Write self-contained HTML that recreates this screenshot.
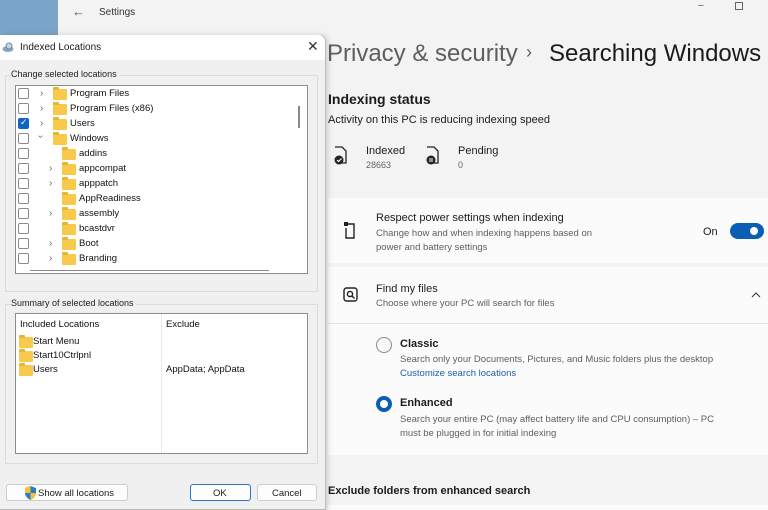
<!DOCTYPE html>
<html><head><meta charset="utf-8"><style>
*{box-sizing:border-box;margin:0;padding:0}
body{width:768px;height:510px;overflow:hidden;position:relative;background:#f3f3f3;font-family:"Liberation Sans",sans-serif;color:#1b1b1b}
.a{position:absolute}
.t{position:absolute;white-space:nowrap}
.fold{position:absolute;width:14px;height:11px;background:#f8c94a;border-radius:1px}
.fold:before{content:"";position:absolute;left:0;top:-2px;width:6px;height:3px;background:#e9b534;border-radius:1px 1px 0 0}
.cb{position:absolute;left:18px;width:11px;height:11px;border:1px solid #8a8a8a;border-radius:2px;background:#fff}
.chev{position:absolute;font-size:10px;color:#666}
.tr{font-size:9.5px;color:#111}
.card{position:absolute;left:328px;width:440px;background:#fbfbfb}
</style></head><body>
<!-- desktop corner -->
<div class="a" style="left:0;top:0;width:58px;height:36px;background:#7ba5c8"></div>
<!-- settings title -->
<div class="t" style="left:72px;top:4px;font-size:13px;color:#555">←</div>
<div class="t" style="left:99px;top:7px;font-size:10px;color:#333">Settings</div>
<div class="t" style="left:698px;top:0;font-size:10px;color:#555">–</div>
<div class="a" style="left:735px;top:2px;width:8px;height:8px;border:1px solid #666"></div>
<!-- settings content -->
<div class="t" style="left:327px;top:40px;font-size:24px;color:#5e5e5e">Privacy &amp; security</div>
<div class="t" style="left:526px;top:42px;font-size:18px;color:#5e5e5e">›</div>
<div class="t" style="left:549px;top:40px;font-size:24px;color:#1b1b1b">Searching Windows</div>
<div class="t" style="left:328px;top:91px;font-size:14px;font-weight:bold">Indexing status</div>
<div class="t" style="left:328px;top:114px;font-size:11px">Activity on this PC is reducing indexing speed</div>
<svg class="a" style="left:332px;top:145px" width="18" height="22" viewBox="0 0 18 22"><path d="M3 2h7l4 4v12H8" fill="none" stroke="#222" stroke-width="1.3"/><circle cx="7" cy="15" r="4.5" fill="#222"/><path d="M5 15l1.5 1.5 3-3" stroke="#fff" stroke-width="1.2" fill="none"/></svg>
<div class="t" style="left:366px;top:145px;font-size:11px">Indexed</div>
<div class="t" style="left:366px;top:160px;font-size:9px;color:#666">28663</div>
<svg class="a" style="left:424px;top:145px" width="18" height="22" viewBox="0 0 18 22"><path d="M3 2h7l4 4v12H8" fill="none" stroke="#222" stroke-width="1.3"/><circle cx="7" cy="15" r="4.5" fill="#222"/><path d="M5 14h4M5 16h4" stroke="#fff" stroke-width="1"/></svg>
<div class="t" style="left:458px;top:145px;font-size:11px">Pending</div>
<div class="t" style="left:458px;top:160px;font-size:9px;color:#666">0</div>

<div class="card" style="top:198px;height:65px"></div>
<svg class="a" style="left:343px;top:220px" width="14" height="20" viewBox="0 0 14 20"><path d="M5 4h6v14H3V8" fill="none" stroke="#222" stroke-width="1.4"/><rect x="1" y="2" width="4" height="4" fill="#222"/></svg>
<div class="t" style="left:376px;top:212px;font-size:11px">Respect power settings when indexing</div>
<div class="t" style="left:376px;top:227px;font-size:9.5px;color:#5e5e5e;line-height:13.5px">Change how and when indexing happens based on<br>power and battery settings</div>
<div class="t" style="left:703px;top:226px;font-size:11px">On</div>
<div class="a" style="left:730px;top:223px;width:34px;height:16px;border-radius:8px;background:#0a5fb4"></div>
<div class="a" style="left:750px;top:227px;width:8px;height:8px;border-radius:50%;background:#fff"></div>

<div class="card" style="top:267px;height:188px"></div>
<div class="a" style="left:328px;top:323px;width:440px;height:1px;background:#e5e5e5"></div>
<svg class="a" style="left:343px;top:287px" width="16" height="16" viewBox="0 0 16 16"><rect x="1" y="1" width="13" height="13" rx="2.5" fill="none" stroke="#222" stroke-width="1.4"/><circle cx="7" cy="7" r="2.6" fill="none" stroke="#222" stroke-width="1.4"/><path d="M9 9l2.5 2.5" stroke="#222" stroke-width="1.4"/></svg>
<div class="t" style="left:376px;top:283px;font-size:11px">Find my files</div>
<div class="t" style="left:376px;top:298px;font-size:9.5px;color:#5e5e5e">Choose where your PC will search for files</div>
<svg class="a" style="left:751px;top:291px" width="10" height="7" viewBox="0 0 10 7"><path d="M1 6l4-4 4 4" fill="none" stroke="#333" stroke-width="1"/></svg>
<div class="a" style="left:376px;top:337px;width:16px;height:16px;border-radius:50%;border:1px solid #8a8a8a;background:#f7f7f7"></div>
<div class="t" style="left:400px;top:338px;font-size:11px;font-weight:bold">Classic</div>
<div class="t" style="left:400px;top:354px;font-size:9.5px;color:#5e5e5e">Search only your Documents, Pictures, and Music folders plus the desktop</div>
<div class="t" style="left:400px;top:368px;font-size:9.5px;color:#1a5fa8">Customize search locations</div>
<div class="a" style="left:376px;top:396px;width:16px;height:16px;border-radius:50%;border:4.5px solid #0a5fb4;background:#fff"></div>
<div class="t" style="left:400px;top:397px;font-size:11px;font-weight:bold">Enhanced</div>
<div class="t" style="left:400px;top:413px;font-size:9.5px;color:#5e5e5e;line-height:14px">Search your entire PC (may affect battery life and CPU consumption) – PC<br>must be plugged in for initial indexing</div>
<div class="t" style="left:328px;top:485px;font-size:11px;font-weight:bold">Exclude folders from enhanced search</div>
<div class="a" style="left:328px;top:505px;width:440px;height:5px;background:#fbfbfb"></div>

<!-- dialog -->
<div class="a" style="left:0;top:35px;width:326px;height:475px;background:#f0f0f0;border:1px solid #bbb;border-left:none;border-radius:0 7px 0 0;box-shadow:2px 0 6px rgba(0,0,0,.15)"></div>
<div class="a" style="left:0;top:35px;width:325px;height:25px;background:#fff;border-radius:0 7px 0 0"></div>
<svg class="a" style="left:2px;top:42px" width="13" height="11" viewBox="0 0 13 11"><ellipse cx="6" cy="7" rx="5.5" ry="3" fill="#8aa3c0"/><circle cx="7" cy="4" r="3" fill="#c9d5e3" stroke="#6d87a6"/></svg>
<div class="t" style="left:20px;top:42px;font-size:10px">Indexed Locations</div>
<div class="t" style="left:307px;top:38px;font-size:14px;color:#333">✕</div>

<div class="a" style="left:5px;top:75px;width:313px;height:217px;border:1px solid #dcdcdc"></div>
<div class="t" style="left:11px;top:69px;font-size:9px;background:#f0f0f0;padding-right:2px">Change selected locations</div>
<div class="a" style="left:15px;top:85px;width:293px;height:189px;background:#fff;border:1px solid #8c8c8c"></div>
<div class="a" style="left:298px;top:106px;width:2px;height:22px;background:#888"></div>
<div class="a" style="left:30px;top:270px;width:239px;height:1px;background:#888"></div>

<!-- tree rows -->
<div class="cb" style="top:88px"></div><div class="chev" style="left:40px;top:88px">›</div><div class="fold" style="left:53px;top:89px"></div><div class="t tr" style="left:70px;top:88px">Program Files</div>
<div class="cb" style="top:103px"></div><div class="chev" style="left:40px;top:103px">›</div><div class="fold" style="left:53px;top:104px"></div><div class="t tr" style="left:70px;top:103px">Program Files (x86)</div>
<div class="cb" style="top:118px;background:#1462c4;border-color:#1462c4"></div><div class="t" style="left:20px;top:117px;font-size:9px;color:#fff">✓</div><div class="chev" style="left:40px;top:118px">›</div><div class="fold" style="left:53px;top:119px"></div><div class="t tr" style="left:70px;top:118px">Users</div>
<div class="cb" style="top:133px"></div><div class="chev" style="left:39px;top:131px;transform:rotate(90deg)">›</div><div class="fold" style="left:53px;top:134px"></div><div class="t tr" style="left:70px;top:133px">Windows</div>
<div class="cb" style="top:148px"></div><div class="fold" style="left:62px;top:149px"></div><div class="t tr" style="left:79px;top:148px">addins</div>
<div class="cb" style="top:163px"></div><div class="chev" style="left:49px;top:163px">›</div><div class="fold" style="left:62px;top:164px"></div><div class="t tr" style="left:79px;top:163px">appcompat</div>
<div class="cb" style="top:178px"></div><div class="chev" style="left:49px;top:178px">›</div><div class="fold" style="left:62px;top:179px"></div><div class="t tr" style="left:79px;top:178px">apppatch</div>
<div class="cb" style="top:193px"></div><div class="fold" style="left:62px;top:194px"></div><div class="t tr" style="left:79px;top:193px">AppReadiness</div>
<div class="cb" style="top:208px"></div><div class="chev" style="left:49px;top:208px">›</div><div class="fold" style="left:62px;top:209px"></div><div class="t tr" style="left:79px;top:208px">assembly</div>
<div class="cb" style="top:223px"></div><div class="fold" style="left:62px;top:224px"></div><div class="t tr" style="left:79px;top:223px">bcastdvr</div>
<div class="cb" style="top:238px"></div><div class="chev" style="left:49px;top:238px">›</div><div class="fold" style="left:62px;top:239px"></div><div class="t tr" style="left:79px;top:238px">Boot</div>
<div class="cb" style="top:253px"></div><div class="chev" style="left:49px;top:253px">›</div><div class="fold" style="left:62px;top:254px"></div><div class="t tr" style="left:79px;top:253px">Branding</div>

<div class="a" style="left:5px;top:304px;width:313px;height:160px;border:1px solid #dcdcdc"></div>
<div class="t" style="left:11px;top:298px;font-size:9px;background:#f0f0f0;padding-right:2px">Summary of selected locations</div>
<div class="a" style="left:15px;top:313px;width:293px;height:141px;background:#fff;border:1px solid #8c8c8c"></div>
<div class="a" style="left:161px;top:314px;width:1px;height:139px;background:#e8e8e8"></div>
<div class="t tr" style="left:20px;top:319px">Included Locations</div>
<div class="t tr" style="left:166px;top:319px">Exclude</div>
<div class="fold" style="left:19px;top:337px"></div><div class="t tr" style="left:33px;top:336px">Start Menu</div>
<div class="fold" style="left:19px;top:351px"></div><div class="t tr" style="left:33px;top:350px">Start10Ctrlpnl</div>
<div class="fold" style="left:19px;top:365px"></div><div class="t tr" style="left:33px;top:364px">Users</div>
<div class="t tr" style="left:166px;top:364px">AppData; AppData</div>

<div class="a" style="left:6px;top:484px;width:122px;height:17px;background:#fdfdfd;border:1px solid #ccc;border-radius:3px"></div>
<svg class="a" style="left:24px;top:486px" width="13" height="14" viewBox="0 0 13 14"><path d="M6.5 0L12 2v5c0 3-2.5 5.5-5.5 7C3.5 12.5 1 10 1 7V2z" fill="#2d7bd0"/><path d="M6.5 0V7H1V2zM6.5 7H12c0 3-2.5 5.5-5.5 7z" fill="#f2c230"/></svg>
<div class="t" style="left:38px;top:488px;font-size:9.5px">Show all locations</div>
<div class="a" style="left:190px;top:484px;width:61px;height:17px;background:#fdfdfd;border:1px solid #2a73c8;border-radius:3px"></div>
<div class="t" style="left:213px;top:488px;font-size:9.5px">OK</div>
<div class="a" style="left:257px;top:484px;width:60px;height:17px;background:#fdfdfd;border:1px solid #ccc;border-radius:3px"></div>
<div class="t" style="left:272px;top:488px;font-size:9.5px">Cancel</div>
</body></html>
